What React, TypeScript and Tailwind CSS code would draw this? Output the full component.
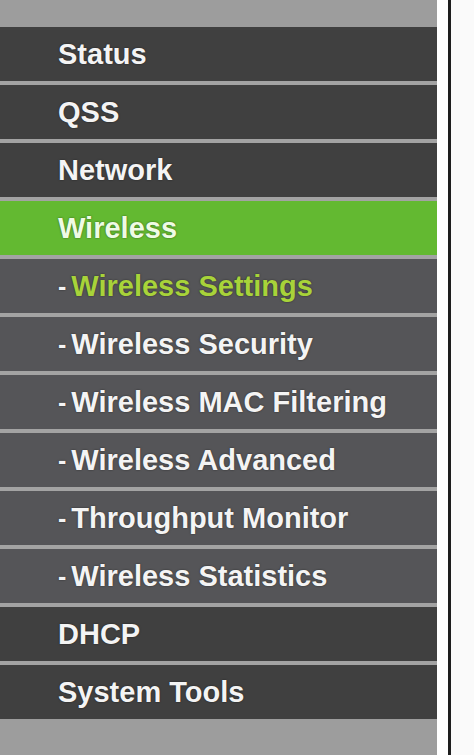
import React from 'react';

type Item = {
  label: string;
  sub?: boolean;
  active?: boolean;
  current?: boolean;
};

const items: Item[] = [
  { label: 'Status' },
  { label: 'QSS' },
  { label: 'Network' },
  { label: 'Wireless', active: true },
  { label: 'Wireless Settings', sub: true, current: true },
  { label: 'Wireless Security', sub: true },
  { label: 'Wireless MAC Filtering', sub: true },
  { label: 'Wireless Advanced', sub: true },
  { label: 'Throughput Monitor', sub: true },
  { label: 'Wireless Statistics', sub: true },
  { label: 'DHCP' },
  { label: 'System Tools' },
];

function MenuRow({ item }: { item: Item }) {
  const bg = item.active ? 'bg-[#63b931]' : item.sub ? 'bg-[#555558]' : 'bg-[#404040]';
  const color = item.current ? 'text-[#a8d33a]' : item.active ? 'text-[#eefbe4]' : 'text-[#f4f4f4]';

  return (
    <div className={`${bg} h-[54px] flex items-center pl-[58px]`}>
      {item.sub && (
        <span className="text-[#f4f4f4] text-[25px] font-bold leading-none mr-[5px] [text-shadow:0_0_2px_rgba(0,0,0,0.55)]">
          -
        </span>
      )}
      <span
        className={`${color} text-[29px] font-bold leading-none [text-shadow:0_0_2px_rgba(0,0,0,0.55)]`}
      >
        {item.label}
      </span>
    </div>
  );
}

export default function App() {
  return (
    <div className="w-[474px] h-[755px] flex bg-white font-['Liberation_Sans',Arial,sans-serif] overflow-hidden">
      {/* Menu column */}
      <div className="w-[437px] shrink-0 flex flex-col bg-[#9d9d9d]">
        <div className="h-[27px] bg-[#9d9d9d]" />
        <div className="flex flex-col gap-[4px] bg-[#a3a3a3]">
          {items.map((item, index) => (
            <MenuRow key={index} item={item} />
          ))}
        </div>
        <div className="flex-1 bg-[#9d9d9d]" />
      </div>

      {/* Frame divider */}
      <div className="w-[11px] shrink-0 bg-white" />
      <div className="w-[3px] shrink-0 bg-[#1e1e1e]" />
      <div className="flex-1 bg-[#fafafa]" />
    </div>
  );
}
